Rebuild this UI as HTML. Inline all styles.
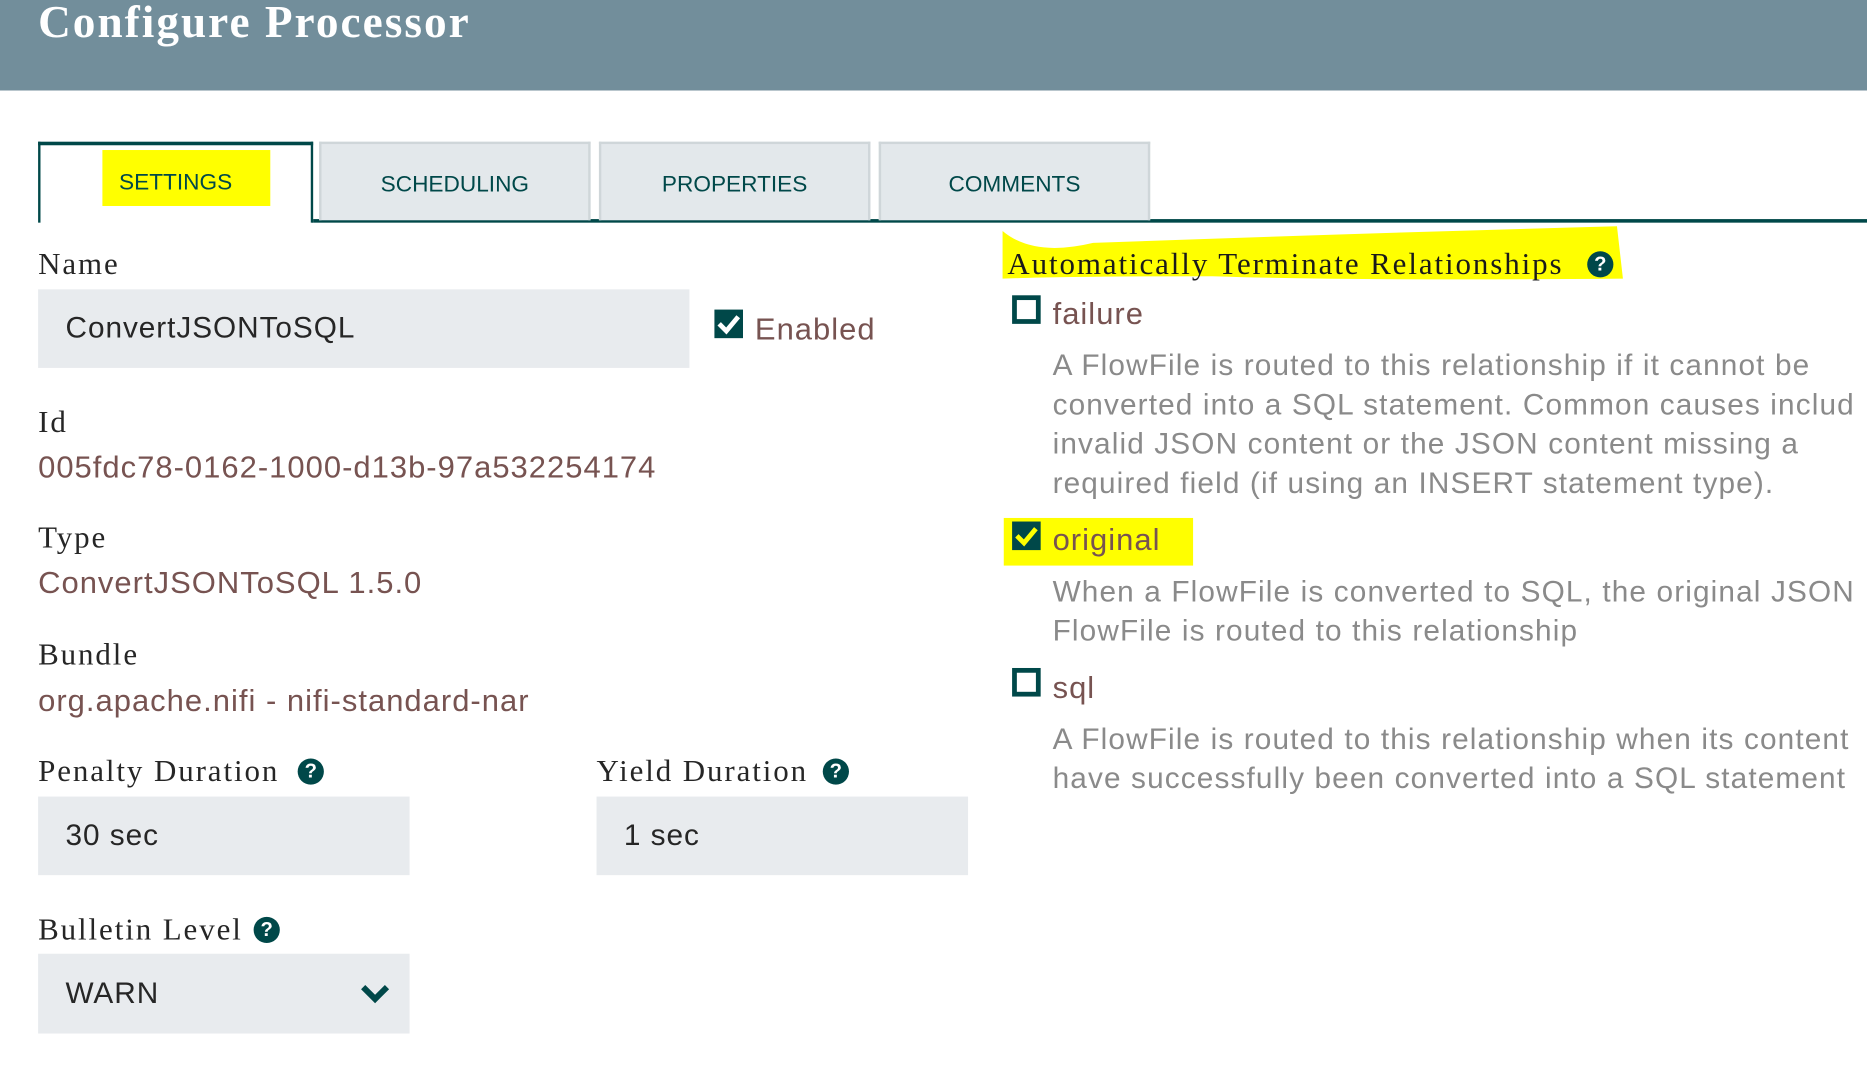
<!DOCTYPE html>
<html><head><meta charset="utf-8"><style>
html,body{margin:0;padding:0;width:1867px;height:1064px;overflow:hidden;background:#fff}
#w{position:absolute;left:0;top:0;width:1568px;height:894px;transform:scale(1.1907);transform-origin:0 0;font-family:"Liberation Sans",sans-serif}
.a{position:absolute;white-space:nowrap}
.lbl{font-family:"Liberation Serif",serif;font-size:26px;letter-spacing:1.6px;color:#262626;line-height:30px}
.val{font-size:26px;letter-spacing:0.85px;color:#775351;line-height:30px}
.inp{position:absolute;background:#e8ebee}
.inp span{position:absolute;left:23px;top:50%;transform:translateY(-50%);font-size:25px;letter-spacing:0.8px;color:#262626}
.tab{position:absolute;top:119px;height:66px;width:228px;background:#e3e8eb;border:2px solid #cfd6d9;border-bottom:none;box-sizing:border-box;font-size:19px;color:#004849;text-align:center;line-height:70px}
.cb{position:absolute;width:24px;height:24px;background:#004849}
.cb i{position:absolute;left:4px;top:4px;width:16px;height:16px;background:#fff}
.desc{font-size:25px;letter-spacing:0.95px;color:#8a8a8a;line-height:33px}
.help{position:absolute;width:22px;height:22px;border-radius:50%;background:#004849;color:#fff;font-weight:bold;font-size:17px;line-height:22px;text-align:center}
</style></head><body><div id="w">
<div class="a" style="left:0;top:0;width:1568px;height:76px;background:#728e9b"></div>
<div class="a" style="left:32px;top:-3px;font-family:'Liberation Serif',serif;font-weight:bold;font-size:38px;letter-spacing:1.7px;color:#fff">Configure Processor</div>

<div class="a" style="left:262px;top:184px;width:1306px;height:3px;background:#004849"></div>
<div class="a" style="left:32px;top:119px;width:231px;height:68px;border:2px solid #004849;border-top:3px solid #004849;border-bottom:none;box-sizing:border-box;background:#fff"></div>
<div class="a" style="left:86px;top:126px;width:141px;height:47px;background:#ffff00"></div>
<div class="a" style="left:32px;top:119px;width:231px;text-align:center;font-size:19px;color:#004849;line-height:70px">SETTINGS</div>
<div class="tab" style="left:268px">SCHEDULING</div>
<div class="tab" style="left:503px">PROPERTIES</div>
<div class="tab" style="left:738px">COMMENTS</div>

<div class="a lbl" style="left:32px;top:207px">Name</div>
<div class="inp" style="left:32px;top:243px;width:547px;height:66px"><span>ConvertJSONToSQL</span></div>
<div class="cb" style="left:600px;top:260px"><svg width="24" height="24" style="position:absolute;left:0;top:0"><path d="M4 12 L10 18 L20 6" stroke="#fff" stroke-width="4" fill="none"/></svg></div>
<div class="a val" style="left:634px;top:261px">Enabled</div>

<div class="a lbl" style="left:32px;top:340px">Id</div>
<div class="a val" style="left:32px;top:377px">005fdc78-0162-1000-d13b-97a532254174</div>
<div class="a lbl" style="left:32px;top:437px">Type</div>
<div class="a val" style="left:32px;top:474px">ConvertJSONToSQL 1.5.0</div>
<div class="a lbl" style="left:32px;top:535px">Bundle</div>
<div class="a val" style="left:32px;top:573px">org.apache.nifi - nifi-standard-nar</div>

<div class="a lbl" style="left:32px;top:633px">Penalty Duration</div>
<div class="help" style="left:250px;top:637px">?</div>
<div class="inp" style="left:32px;top:669px;width:312px;height:66px"><span>30 sec</span></div>
<div class="a lbl" style="left:501px;top:633px">Yield Duration</div>
<div class="help" style="left:691px;top:637px">?</div>
<div class="inp" style="left:501px;top:669px;width:312px;height:66px"><span>1 sec</span></div>

<div class="a lbl" style="left:32px;top:766px">Bulletin Level</div>
<div class="help" style="left:213px;top:770px">?</div>
<div class="inp" style="left:32px;top:801px;width:312px;height:67px"><span>WARN</span>
<svg width="26" height="18" style="position:absolute;left:270px;top:25px"><path d="M3 3 L13 13 L23 3" stroke="#004849" stroke-width="5" fill="none"/></svg></div>

<svg class="a" style="left:838px;top:186px" width="530" height="54"><path d="M4 8 Q30 30 80 18 Q300 10 520 4 L525 48 Q300 50 180 46 Q60 46 4 48 Z" fill="#ffff00"/></svg>
<div class="a lbl" style="left:846px;top:207px;color:#1a1a1a">Automatically Terminate Relationships</div>
<div class="help" style="left:1333px;top:211px">?</div>

<div class="cb" style="left:850px;top:248px"><i></i></div>
<div class="a val" style="left:884px;top:248px">failure</div>
<div class="a desc" style="left:884px;top:291px">A FlowFile is routed to this relationship if it cannot be<br>converted into a SQL statement. Common causes includ<br>invalid JSON content or the JSON content missing a<br>required field (if using an INSERT statement type).</div>

<div class="a" style="left:843px;top:435px;width:159px;height:40px;background:#ffff00"></div>
<div class="cb" style="left:850px;top:438px"><svg width="24" height="24" style="position:absolute;left:0;top:0"><path d="M4 12 L10 18 L20 6" stroke="#ffff00" stroke-width="4" fill="none"/></svg></div>
<div class="a val" style="left:884px;top:438px">original</div>
<div class="a desc" style="left:884px;top:481px">When a FlowFile is converted to SQL, the original JSON<br>FlowFile is routed to this relationship</div>

<div class="cb" style="left:850px;top:561px"><i></i></div>
<div class="a val" style="left:884px;top:562px">sql</div>
<div class="a desc" style="left:884px;top:605px">A FlowFile is routed to this relationship when its content<br>have successfully been converted into a SQL statement</div>
</div></body></html>
